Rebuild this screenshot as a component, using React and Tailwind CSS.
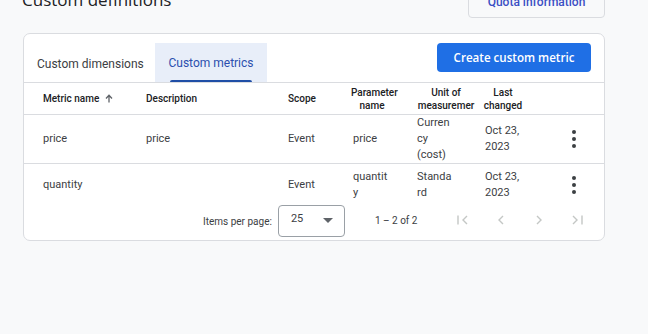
import React from "react";

const rob = { fontFamily: "Roboto, 'Liberation Sans', sans-serif" };
const gs = { fontFamily: "'Open Sans', Roboto, sans-serif" };

function Kebab() {
  return (
    <div className="flex flex-col items-center gap-[3px]">
      <span className="block w-[4px] h-[4px] rounded-full bg-[#3c4043]" />
      <span className="block w-[4px] h-[4px] rounded-full bg-[#3c4043]" />
      <span className="block w-[4px] h-[4px] rounded-full bg-[#3c4043]" />
    </div>
  );
}

const cols = "grid grid-cols-[112px_142px_65px_64px_68px_70px_1fr]";

export default function App() {
  return (
    <div className="w-[648px] h-[334px] bg-[#f8f9fa] overflow-hidden relative" style={rob}>
      <div className="flex items-start justify-between pl-[22px] pr-[43px] -mt-[17px]">
        <div className="mt-[5px] text-[17px] leading-[24px] text-[#202124]" style={gs}>Custom definitions</div>
        <div className="w-[137px] h-[35px] border border-[#dadce0] rounded-[4px] bg-[#f8f9fa] flex items-end justify-center pb-[6px] text-[12px] text-[#3b4fc4] font-medium">
          Quota information
        </div>
      </div>
      <div className="mx-[23px] mt-[15px] w-[582px] bg-white border border-[#dadce0] rounded-[7px]">
        <div className="flex items-end justify-between pt-[9px] border-b border-[#dadce0]">
          <div className="flex items-end text-[12px]" style={rob}>
            <div className="h-[39px] pl-[13px] w-[131px] shrink-0 whitespace-nowrap flex items-center pt-[3px] text-[#3c4043]">Custom dimensions</div>
            <div className="h-[39px] w-[112px] shrink-0 bg-[#e8eef9] flex flex-col items-center justify-end text-[#2b4fae]">
              <div className="flex-1 flex items-center pt-[3px] whitespace-nowrap">Custom metrics</div>
              <div className="w-[82px] h-[2px] bg-[#1f4ea6] rounded-t-sm" />
            </div>
          </div>
          <div className="self-start mr-[13px] w-[154px] h-[29px] rounded-[4px] bg-[#1f6fe5] text-white text-[11.6px] font-semibold flex items-center justify-center whitespace-nowrap" style={gs}>
            Create custom metric
          </div>
        </div>

        <div className={`${cols} h-[32px] items-center border-b border-[#dadce0] text-[10px] leading-[13px] font-medium text-[#202124]`}>
          <div className="pl-[19px] flex items-center gap-[6px]">Metric name
            <svg width="8" height="9" viewBox="0 0 8 9"><path d="M4 8.5V1.5M1 4.5L4 1.2L7 4.5" stroke="#5f6368" strokeWidth="1.3" fill="none"/></svg>
          </div>
          <div className="pl-[10px]">Description</div>
          <div className="pl-[10px]">Scope</div>
          <div className="pl-[8px] text-center w-[50px]">Parameter name</div>
          <div className="pl-[10px] text-center w-[68px] overflow-hidden whitespace-normal">Unit of<br/>measuremer</div>
          <div className="text-center w-[52px] pl-[4px]">Last changed</div>
          <div />
        </div>

        <div className={`${cols} h-[49px] items-center border-b border-[#dadce0] text-[11px] leading-[16px] text-[#3c4043]`}>
          <div className="pl-[19px]">price</div>
          <div className="pl-[10px]">price</div>
          <div className="pl-[10px]">Event</div>
          <div className="pl-[10px]">price</div>
          <div className="pl-[10px] w-[48px] break-all">Curren<br/>cy<br/>(cost)</div>
          <div className="pl-[10px]">Oct 23,<br/>2023</div>
          <div className="flex justify-center pr-[2px]"><Kebab /></div>
        </div>

        <div className={`${cols} h-[42px] items-center text-[11px] leading-[16px] text-[#3c4043]`}>
          <div className="pl-[19px]">quantity</div>
          <div className="pl-[10px]"></div>
          <div className="pl-[10px]">Event</div>
          <div className="pl-[10px]">quantit<br/>y</div>
          <div className="pl-[10px]">Standa<br/>rd</div>
          <div className="pl-[10px]">Oct 23,<br/>2023</div>
          <div className="flex justify-center pr-[2px]"><Kebab /></div>
        </div>

        <div className="flex items-center h-[34px] pb-[3px] pl-[179px] text-[#3c4043]">
          <div className="text-[10px]">Items per page:</div>
          <div className="ml-[6px] w-[67px] h-[32px] border border-[#9aa0a6] rounded-[4px] flex items-center justify-between pl-[12px] pr-[11px] text-[11px] -mt-[2px]">
            <span className="-mt-[3px]">25</span>
            <svg width="10" height="5" viewBox="0 0 10 5"><path d="M0 0L5 5L10 0Z" fill="#5f6368"/></svg>
          </div>
          <div className="ml-[30px] text-[10px] -mt-[3px]">1 – 2 of 2</div>
          <div className="ml-[38px] flex items-center gap-[22px] -mt-[3px]">
            <svg width="16" height="16" viewBox="0 0 16 16" fill="none" stroke="#c4c7c5" strokeWidth="1.4"><path d="M3 3.5V12.5M12 4L8 8L12 12"/></svg>
            <svg width="16" height="16" viewBox="0 0 16 16" fill="none" stroke="#c4c7c5" strokeWidth="1.4"><path d="M10 4L6 8L10 12"/></svg>
            <svg width="16" height="16" viewBox="0 0 16 16" fill="none" stroke="#c4c7c5" strokeWidth="1.4"><path d="M6 4L10 8L6 12"/></svg>
            <svg width="16" height="16" viewBox="0 0 16 16" fill="none" stroke="#c4c7c5" strokeWidth="1.4"><path d="M4 4L8 8L4 12M13 3.5V12.5"/></svg>
          </div>
        </div>
      </div>
    </div>
  );
}
